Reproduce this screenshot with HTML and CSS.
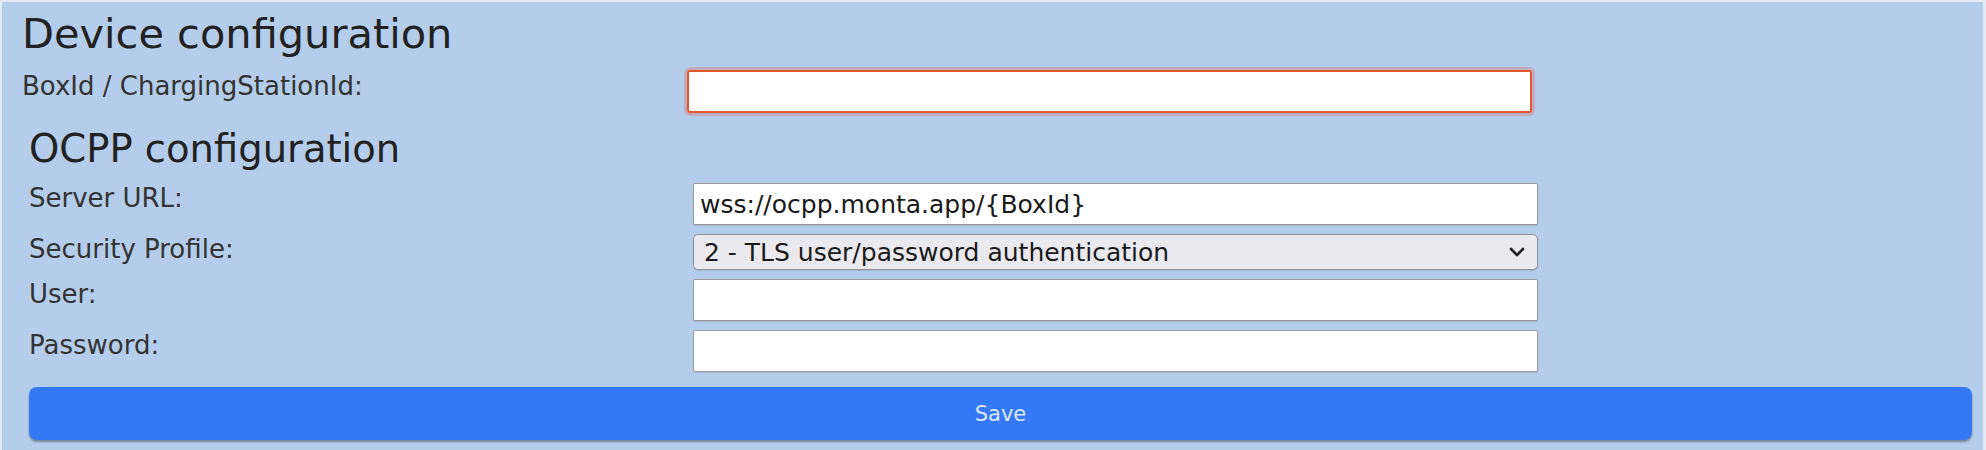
FILE: index.html
```html
<!DOCTYPE html>
<html lang="en">

<head>
    <meta charset="UTF-8">
    <meta name="viewport" content="width=device-width, initial-scale=1.0">
    <title>Configuration</title>
    <link rel="stylesheet" href="styles.css">
</head>

<body>
    <div class="page">
        <!-- 设备配置 -->
        <section class="device">
            <h2 class="title">Device configuration</h2>
            <div class="form_grid">
                <label for="boxId">BoxId / ChargingStationId:</label>
                <input id="boxId" class="invalid" type="text">
            </div>
        </section>

        <!-- OCPP 配置 -->
        <section class="ocpp">
            <h3 class="subtitle">OCPP configuration</h3>
            <div class="form_grid">
                <label for="serverUrl">Server URL:</label>
                <input id="serverUrl" type="text" value="wss://ocpp.monta.app/{BoxId}">

                <label for="profile">Security Profile:</label>
                <div class="select_wrap">
                    <select id="profile">
                        <option>0 - No security</option>
                        <option>1 - User/password authentication</option>
                        <option selected>2 - TLS user/password authentication</option>
                        <option>3 - TLS client certificate</option>
                    </select>
                    <svg class="select_arrow" width="16" height="10" viewBox="0 0 16 10">
                        <path d="M2 2 L8 8 L14 2" fill="none" stroke="#222" stroke-width="2.6" stroke-linecap="round" stroke-linejoin="round" />
                    </svg>
                </div>

                <label for="user">User:</label>
                <input id="user" type="text">

                <label for="password">Password:</label>
                <input id="password" type="password">
            </div>

            <button class="save" type="button">Save</button>
        </section>
    </div>
</body>

</html>
```

FILE: styles.css
```css
* {
    margin: 0;
    padding: 0;
    box-sizing: border-box;
}

body {
    background-color: #e2eaf5;
    font-family: "DejaVu Sans", "Liberation Sans", sans-serif;
    color: #222;
}

.page {
    margin: 2px 3px 0 2px;
    min-height: 448px;
    padding: 8px 11px 0 20px;
    background-color: #b4cdeb;
}

.title {
    font-size: 41.5px;
    font-weight: normal;
    line-height: 48px;
    color: #222;
}

.subtitle {
    font-size: 38.5px;
    font-weight: normal;
    line-height: 44px;
    color: #222;
}

/* 表单：左边标签，右边输入框 */
.form_grid {
    display: grid;
    grid-template-columns: 664px 845px;
    row-gap: 9px;
    align-items: start;
}

.form_grid label {
    font-size: 26px;
    line-height: 28px;
    padding-top: 1px;
    color: #333;
}

.device .form_grid {
    margin-top: 12px;
    grid-template-columns: 665px 845px;
}

.device .form_grid label {
    padding-top: 2px;
}

.form_grid input,
.form_grid select {
    width: 100%;
    font-family: inherit;
    font-size: 25px;
    color: #1a1a1a;
    outline: none;
}

.form_grid input {
    height: 42px;
    padding: 0 6px;
    background-color: #fff;
    border: 1px solid #9a9aa2;
    border-radius: 2px;
    box-shadow: 0 1px 1px rgba(0, 0, 0, 0.12);
}

/* 必填但为空 */
.form_grid input.invalid {
    height: 43px;
    border: 2px solid #e2582b;
    border-radius: 3px;
    box-shadow: 0 0 0 3px rgba(196, 164, 180, 0.8);
}

.select_wrap {
    position: relative;
}

.form_grid select {
    height: 36px;
    padding: 0 40px 0 10px;
    appearance: none;
    -webkit-appearance: none;
    background-color: #e9e9ee;
    border: 1px solid #8f8f9d;
    border-radius: 5px;
    box-shadow: 0 1px 1px rgba(0, 0, 0, 0.12);
}

.select_arrow {
    position: absolute;
    right: 13px;
    top: 13px;
    pointer-events: none;
}

.ocpp {
    margin-top: 14px;
    margin-left: 7px;
}

.ocpp .form_grid {
    margin-top: 12px;
}

.save {
    display: block;
    width: 100%;
    height: 53px;
    margin-top: 15px;
    font-family: inherit;
    font-size: 21px;
    color: #dce8fc;
    background-color: #3478f6;
    border: none;
    border-radius: 8px;
    box-shadow: 0 2px 2px rgba(0, 0, 0, 0.35);
    cursor: pointer;
}
```
